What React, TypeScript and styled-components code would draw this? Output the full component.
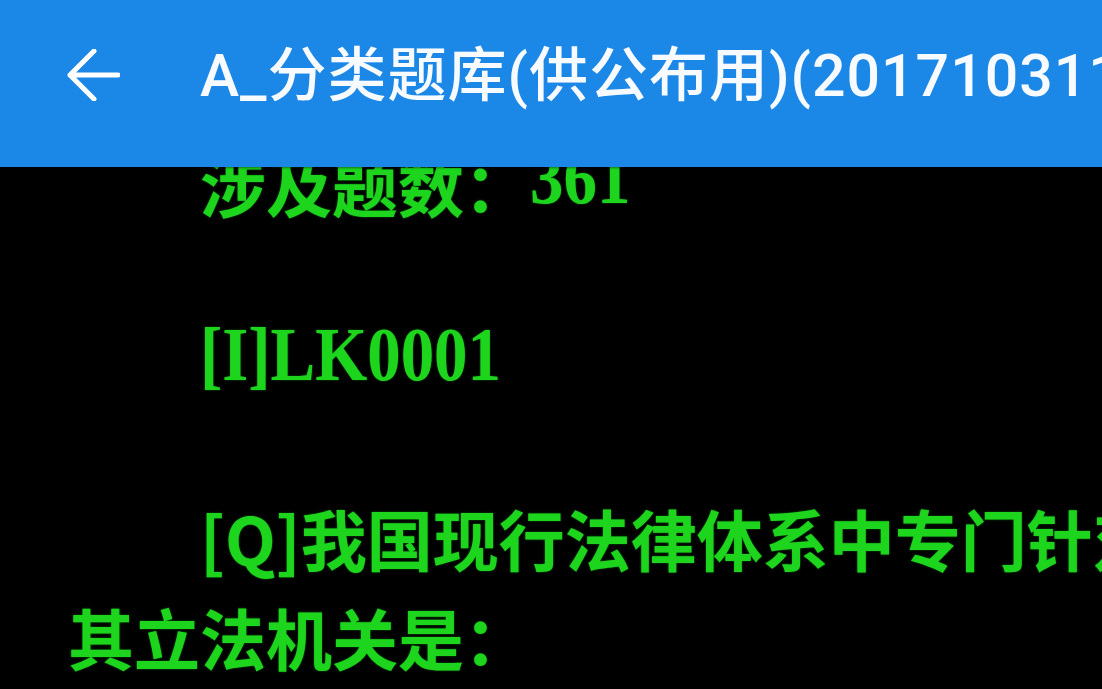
import styled, { createGlobalStyle } from 'styled-components';

const GlobalStyle = createGlobalStyle`
  html, body {
    margin: 0;
    padding: 0;
    background: #000;
    overflow: hidden;
  }
`;

const Screen = styled.div`
  width: 1102px;
  height: 689px;
  overflow: hidden;
  background: #000;
`;

const TopBar = styled.header`
  position: fixed;
  top: 0;
  left: 0;
  right: 0;
  z-index: 2;
  height: 167px;
  box-sizing: border-box;
  padding: 0 0 17px 66px;
  display: flex;
  align-items: center;
  background: #1b87e6;
  box-shadow: 0 1px 2px rgba(0, 0, 0, 0.45);
  overflow: hidden;
`;

const BackButton = styled.button`
  flex: none;
  width: 54px;
  height: 52px;
  padding: 0;
  border: 0;
  background: transparent;
  display: flex;
  cursor: pointer;
`;

const Title = styled.h1`
  margin: 0 0 0 80px;
  font-family: Roboto, 'Noto Sans CJK SC', sans-serif;
  font-size: 59px;
  font-weight: 500;
  letter-spacing: 1px;
  line-height: 1;
  color: #f7faff;
  white-space: nowrap;
`;

const Reader = styled.main`
  width: 1965px;
  padding: 134px 0 0 68px;
  font-family: 'Noto Sans CJK SC', sans-serif;
  font-size: 66px;
  font-weight: 700;
  line-height: 99px;
  color: #1dd51d;
  text-shadow: 0 0 2px rgba(29, 213, 29, 0.55);
`;

const Para = styled.p`
  margin: 0 0 75px;
  text-indent: 2em;
`;

const Serif = styled.span`
  display: inline-block;
  text-indent: 0;
  font-family: 'Liberation Serif', serif;
  font-weight: 700;
  font-size: 76px;
  transform: translateY(-9px) scaleX(0.88);
  transform-origin: left center;
`;

function BackArrow() {
  return (
    <svg width="54" height="52" viewBox="0 0 54 52" fill="none">
      <path
        d="M4 26H52M28 2L4 26L28 50"
        stroke="#fff"
        strokeWidth="5"
        strokeLinecap="round"
        strokeLinejoin="round"
      />
    </svg>
  );
}

export default function App() {
  return (
    <Screen>
      <GlobalStyle />
      <TopBar>
        <BackButton aria-label="返回">
          <BackArrow />
        </BackButton>
        <Title>A_分类题库(供公布用)(2017103111).txt</Title>
      </TopBar>

      <Reader>
        <Para>
          涉及题数：<Serif>361</Serif>
        </Para>
        <Para>
          <Serif>[I]LK0001</Serif>
        </Para>
        <Para>[Q]我国现行法律体系中专门针对无线电管理的最高法律文件及其立法机关是：</Para>
        <Para>[A]中华人民共和国无线电管理条例，国务院和中央军委</Para>
      </Reader>
    </Screen>
  );
}
